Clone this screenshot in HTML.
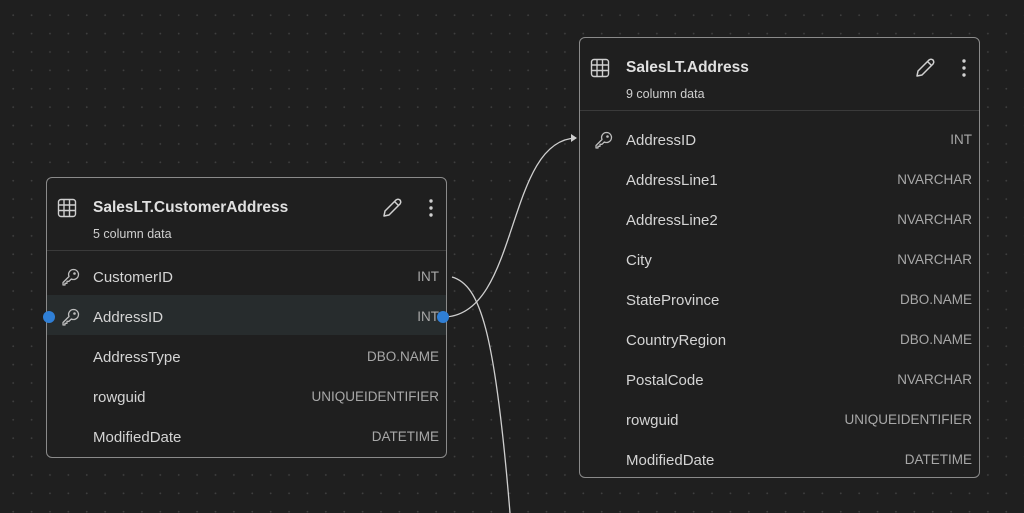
<!DOCTYPE html>
<html><head><meta charset="utf-8"><style>
*{margin:0;padding:0;box-sizing:border-box}
body{width:1024px;height:513px;overflow:hidden;background:#1f1f1f;background-image:radial-gradient(circle,#3f3f3f 0.8px,transparent 1.1px);background-size:18.4px 18.4px;background-position:4px 6px;font-family:"Liberation Sans",sans-serif;position:relative}
.card{position:absolute;width:401px;background:#1f1f1f;border:1px solid #8a8a8a;border-radius:6px}
.hd{height:73px;border-bottom:1px solid #3a3a3a;position:relative}
.ti{position:absolute;left:46px;top:21px;color:#e0e0e0;font-size:15.5px;font-weight:bold}
.su{position:absolute;left:46px;top:49px;color:#cfcfcf;font-size:12.5px}
.grid{position:absolute;left:10px;top:20px}
.pen{position:absolute;right:42px;top:18px}
.dots{position:absolute;right:12px;top:20px}
.row{height:40px;position:relative;color:#d4d4d4;font-size:15px}
.row .n{position:absolute;left:46px;top:14px}
.row .t{position:absolute;right:7px;top:14px;color:#a8a8a8;font-size:13.5px}
.row .k{position:absolute;left:14px;top:12px}
.hl{background:#272c2d}
</style></head><body>
<svg width="1024" height="513" style="position:absolute;left:0;top:0;z-index:2;pointer-events:none">
<path d="M443 317 C520 317,505 140,576 138" fill="none" stroke="#cfcfcf" stroke-width="1.3"/>
<path d="M571 134 L577 138 L571 142Z" fill="#cfcfcf"/>
<path d="M452 277 C480 285,495 330,510 513" fill="none" stroke="#cfcfcf" stroke-width="1.3"/>
<circle cx="49" cy="317" r="6" fill="#2f7fd6"/>
<circle cx="443" cy="317" r="6" fill="#2f7fd6"/>
</svg>
<svg width="0" height="0" style="position:absolute"><defs>
<symbol id="g" viewBox="0 0 20 20"><rect x="1.5" y="1.5" width="17" height="17" rx="2.5" fill="none" stroke="#cfcfcf" stroke-width="1.4"/><path d="M1.5 7h17M1.5 12.5h17M7 1.5v17M12.5 1.5v17" stroke="#cfcfcf" stroke-width="1.4"/></symbol>
<symbol id="p" viewBox="0 0 24 24"><path d="M4 20 L5 15 L16 4 Q18 2.5 20 4 Q21.5 6 20 8 L9 19 Z M14.5 5.5 L18.5 9.5" fill="none" stroke="#d0d0d0" stroke-width="1.5" stroke-linejoin="round"/></symbol>
<symbol id="k" viewBox="0 0 20 20"><path d="M12.5 2.5a5 5 0 1 1-2.2 9.5L8 14.3H6v2H4v1.7H2v-2.5l6-6a5 5 0 0 1 4.5-7z" fill="none" stroke="#bdbdbd" stroke-width="1.3" stroke-linejoin="round"/><circle cx="13.5" cy="6.5" r="1.3" fill="#bdbdbd"/></symbol>
</defs></svg>

<div class="card" style="left:46px;top:177px;height:281px">
<div class="hd"><svg class="grid" width="20" height="20"><use href="#g"/></svg><div class="ti">SalesLT.CustomerAddress</div><div class="su">5 column data</div>
<svg class="pen" width="24" height="24"><use href="#p"/></svg>
<svg class="dots" width="6" height="20"><circle cx="3" cy="3" r="1.7" fill="#d0d0d0"/><circle cx="3" cy="10" r="1.7" fill="#d0d0d0"/><circle cx="3" cy="17" r="1.7" fill="#d0d0d0"/></svg></div>
<div style="height:4px"></div>
<div class="row"><svg class="k" width="20" height="20"><use href="#k"/></svg><span class="n">CustomerID</span><span class="t">INT</span></div>
<div class="row hl"><svg class="k" width="20" height="20"><use href="#k"/></svg><span class="n">AddressID</span><span class="t">INT</span></div>
<div class="row"><span class="n">AddressType</span><span class="t">DBO.NAME</span></div>
<div class="row"><span class="n">rowguid</span><span class="t">UNIQUEIDENTIFIER</span></div>
<div class="row"><span class="n">ModifiedDate</span><span class="t">DATETIME</span></div>
</div>

<div class="card" style="left:579px;top:37px;height:441px">
<div class="hd"><svg class="grid" width="20" height="20"><use href="#g"/></svg><div class="ti">SalesLT.Address</div><div class="su">9 column data</div>
<svg class="pen" width="24" height="24"><use href="#p"/></svg>
<svg class="dots" width="6" height="20"><circle cx="3" cy="3" r="1.7" fill="#d0d0d0"/><circle cx="3" cy="10" r="1.7" fill="#d0d0d0"/><circle cx="3" cy="17" r="1.7" fill="#d0d0d0"/></svg></div>
<div style="height:7px"></div>
<div class="row"><svg class="k" width="20" height="20"><use href="#k"/></svg><span class="n">AddressID</span><span class="t">INT</span></div>
<div class="row"><span class="n">AddressLine1</span><span class="t">NVARCHAR</span></div>
<div class="row"><span class="n">AddressLine2</span><span class="t">NVARCHAR</span></div>
<div class="row"><span class="n">City</span><span class="t">NVARCHAR</span></div>
<div class="row"><span class="n">StateProvince</span><span class="t">DBO.NAME</span></div>
<div class="row"><span class="n">CountryRegion</span><span class="t">DBO.NAME</span></div>
<div class="row"><span class="n">PostalCode</span><span class="t">NVARCHAR</span></div>
<div class="row"><span class="n">rowguid</span><span class="t">UNIQUEIDENTIFIER</span></div>
<div class="row"><span class="n">ModifiedDate</span><span class="t">DATETIME</span></div>
</div>
</body></html>
